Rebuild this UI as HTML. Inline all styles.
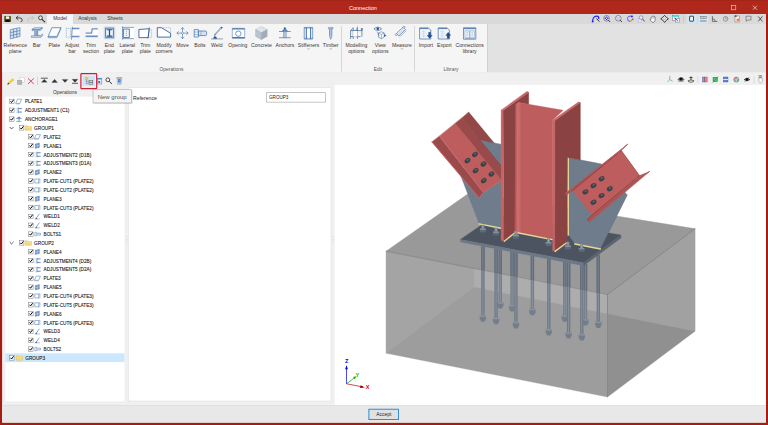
<!DOCTYPE html>
<html><head><meta charset="utf-8"><title>Connection</title>
<style>
html,body{margin:0;padding:0}
body{width:768px;height:425px;overflow:hidden;background:#b0281c;font-family:"Liberation Sans", sans-serif;position:relative}
svg{position:absolute;left:0;top:0;overflow:visible;font-family:"Liberation Sans", sans-serif}
span{position:absolute;left:0;top:0;white-space:nowrap}
</style></head><body>
<svg width="768" height="425" viewBox="0 0 768 425"><rect x="0.00" y="0.00" width="768.00" height="425.00" fill="#a41c13" rx="0" />
<rect x="0.00" y="0.00" width="768.00" height="14.20" fill="#b0281c" rx="0" />
<rect x="2.10" y="14.00" width="763.90" height="408.60" fill="#f0f0f0" rx="0" />
<rect x="0.00" y="0.00" width="768.00" height="0.80" fill="#a2231a" rx="0" /></svg>
<span style="font-size:5.5px;line-height:6.60px;color:#ffffff;transform:translate(362.90px,5.0px) translateX(-50%);">Connection</span>
<svg width="768" height="425" viewBox="0 0 768 425"><rect x="731.7" y="5.7" width="4.1" height="4.1" fill="none" stroke="#fff" stroke-width="0.55" opacity="0.85"/><path d="M752.9 5.6l4.2 4.2M757.1 5.6l-4.2 4.2" stroke="#fff" stroke-width="0.65" fill="none" opacity="0.9"/>
<rect x="2.10" y="14.00" width="763.90" height="10.10" fill="#d9d9d9" rx="0" />
<rect x="47.00" y="14.30" width="26.00" height="9.70" fill="#f5f5f5" rx="0" /></svg>
<span style="font-size:5.0px;line-height:6.00px;color:#333;transform:translate(60.00px,15.0px) translateX(-50%);">Model</span>
<span style="font-size:5.0px;line-height:6.00px;color:#333;transform:translate(87.50px,15.0px) translateX(-50%);">Analysis</span>
<span style="font-size:5.0px;line-height:6.00px;color:#333;transform:translate(115.00px,15.0px) translateX(-50%);">Sheets</span>
<svg width="768" height="425" viewBox="0 0 768 425"><rect x="2.10" y="24.00" width="763.90" height="48.30" fill="#e2e2e2" rx="0" />
<rect x="2.10" y="24.00" width="485.40" height="48.30" fill="#f5f5f5" rx="0" />
<rect x="487.20" y="24.00" width="0.70" height="48.30" fill="#c6c6c6" rx="0" />
<rect x="341.20" y="26.00" width="0.70" height="45.50" fill="#c9c9c9" rx="0" />
<rect x="414.30" y="26.00" width="0.70" height="45.50" fill="#c9c9c9" rx="0" /></svg>
<span style="font-size:5.1px;line-height:6.12px;color:#3c3434;transform:translate(15.30px,42.0px) translateX(-50%);">Reference</span>
<span style="font-size:5.1px;line-height:6.12px;color:#3c3434;transform:translate(15.30px,48.0px) translateX(-50%);">plane</span>
<span style="font-size:5.1px;line-height:6.12px;color:#3c3434;transform:translate(36.80px,42.0px) translateX(-50%);">Bar</span>
<span style="font-size:5.1px;line-height:6.12px;color:#3c3434;transform:translate(54.30px,42.0px) translateX(-50%);">Plate</span>
<span style="font-size:5.1px;line-height:6.12px;color:#3c3434;transform:translate(72.10px,42.0px) translateX(-50%);">Adjust</span>
<span style="font-size:5.1px;line-height:6.12px;color:#3c3434;transform:translate(72.10px,48.0px) translateX(-50%);">bar</span>
<span style="font-size:5.1px;line-height:6.12px;color:#3c3434;transform:translate(91.00px,42.0px) translateX(-50%);">Trim</span>
<span style="font-size:5.1px;line-height:6.12px;color:#3c3434;transform:translate(91.00px,48.0px) translateX(-50%);">section</span>
<span style="font-size:5.1px;line-height:6.12px;color:#3c3434;transform:translate(109.30px,42.0px) translateX(-50%);">End</span>
<span style="font-size:5.1px;line-height:6.12px;color:#3c3434;transform:translate(109.30px,48.0px) translateX(-50%);">plate</span>
<span style="font-size:5.1px;line-height:6.12px;color:#3c3434;transform:translate(127.30px,42.0px) translateX(-50%);">Lateral</span>
<span style="font-size:5.1px;line-height:6.12px;color:#3c3434;transform:translate(127.30px,48.0px) translateX(-50%);">plate</span>
<span style="font-size:5.1px;line-height:6.12px;color:#3c3434;transform:translate(145.20px,42.0px) translateX(-50%);">Trim</span>
<span style="font-size:5.1px;line-height:6.12px;color:#3c3434;transform:translate(145.20px,48.0px) translateX(-50%);">plate</span>
<span style="font-size:5.1px;line-height:6.12px;color:#3c3434;transform:translate(164.00px,42.0px) translateX(-50%);">Modify</span>
<span style="font-size:5.1px;line-height:6.12px;color:#3c3434;transform:translate(164.00px,48.0px) translateX(-50%);">corners</span>
<span style="font-size:5.1px;line-height:6.12px;color:#3c3434;transform:translate(182.50px,42.0px) translateX(-50%);">Move</span>
<span style="font-size:5.1px;line-height:6.12px;color:#3c3434;transform:translate(200.00px,42.0px) translateX(-50%);">Bolts</span>
<span style="font-size:5.1px;line-height:6.12px;color:#3c3434;transform:translate(216.80px,42.0px) translateX(-50%);">Weld</span>
<span style="font-size:5.1px;line-height:6.12px;color:#3c3434;transform:translate(237.80px,42.0px) translateX(-50%);">Opening</span>
<span style="font-size:5.1px;line-height:6.12px;color:#3c3434;transform:translate(261.40px,42.0px) translateX(-50%);">Concrete</span>
<span style="font-size:5.1px;line-height:6.12px;color:#3c3434;transform:translate(284.90px,42.0px) translateX(-50%);">Anchors</span>
<span style="font-size:5.1px;line-height:6.12px;color:#3c3434;transform:translate(308.50px,42.0px) translateX(-50%);">Stiffeners</span>
<svg width="768" height="425" viewBox="0 0 768 425"><path d="M307.6 48.4l0.9 0.9l0.9 -0.9" stroke="#333" stroke-width="0.45" fill="none"/></svg>
<span style="font-size:5.1px;line-height:6.12px;color:#3c3434;transform:translate(330.70px,42.0px) translateX(-50%);">Timber</span>
<svg width="768" height="425" viewBox="0 0 768 425"><path d="M329.8 48.4l0.9 0.9l0.9 -0.9" stroke="#333" stroke-width="0.45" fill="none"/></svg>
<span style="font-size:5.1px;line-height:6.12px;color:#3c3434;transform:translate(356.40px,42.0px) translateX(-50%);">Modelling</span>
<span style="font-size:5.1px;line-height:6.12px;color:#3c3434;transform:translate(356.40px,48.0px) translateX(-50%);">options</span>
<span style="font-size:5.1px;line-height:6.12px;color:#3c3434;transform:translate(380.30px,42.0px) translateX(-50%);">View</span>
<span style="font-size:5.1px;line-height:6.12px;color:#3c3434;transform:translate(380.30px,48.0px) translateX(-50%);">options</span>
<span style="font-size:5.1px;line-height:6.12px;color:#3c3434;transform:translate(401.90px,42.0px) translateX(-50%);">Measure</span>
<svg width="768" height="425" viewBox="0 0 768 425"><path d="M401.0 48.4l0.9 0.9l0.9 -0.9" stroke="#333" stroke-width="0.45" fill="none"/></svg>
<span style="font-size:5.1px;line-height:6.12px;color:#3c3434;transform:translate(425.90px,42.0px) translateX(-50%);">Import</span>
<span style="font-size:5.1px;line-height:6.12px;color:#3c3434;transform:translate(444.40px,42.0px) translateX(-50%);">Export</span>
<span style="font-size:5.1px;line-height:6.12px;color:#3c3434;transform:translate(469.70px,42.0px) translateX(-50%);">Connections</span>
<span style="font-size:5.1px;line-height:6.12px;color:#3c3434;transform:translate(469.70px,48.0px) translateX(-50%);">library</span>
<span style="font-size:4.9px;line-height:5.88px;color:#555;transform:translate(171.50px,67.0px) translateX(-50%);">Operations</span>
<span style="font-size:4.9px;line-height:5.88px;color:#555;transform:translate(378.00px,67.0px) translateX(-50%);">Edit</span>
<span style="font-size:4.9px;line-height:5.88px;color:#555;transform:translate(451.00px,67.0px) translateX(-50%);">Library</span>
<span style="font-size:4.9px;line-height:5.88px;color:#333;transform:translate(65.00px,90.0px) translateX(-50%);">Operations</span>
<svg width="768" height="425" viewBox="0 0 768 425"><rect x="5.50" y="96.60" width="119.00" height="304.70" fill="#ffffff" rx="0" />
<rect x="5.40" y="353.30" width="119.10" height="8.80" fill="#cce8ff" rx="0" /></svg>
<span style="font-size:4.7px;line-height:5.64px;color:#141414;transform:translate(24.90px,99.0px);-webkit-text-stroke:0.1px #333;">PLATE1</span>
<span style="font-size:4.7px;line-height:5.64px;color:#141414;transform:translate(24.90px,108.0px);-webkit-text-stroke:0.1px #333;">ADJUSTMENT1 (C1)</span>
<span style="font-size:4.7px;line-height:5.64px;color:#141414;transform:translate(24.90px,117.0px);-webkit-text-stroke:0.1px #333;">ANCHORAGE1</span>
<span style="font-size:4.7px;line-height:5.64px;color:#141414;transform:translate(34.10px,126.0px);-webkit-text-stroke:0.1px #333;">GROUP1</span>
<span style="font-size:4.7px;line-height:5.64px;color:#141414;transform:translate(43.60px,135.0px);-webkit-text-stroke:0.1px #333;">PLATE2</span>
<span style="font-size:4.7px;line-height:5.64px;color:#141414;transform:translate(43.60px,144.0px);-webkit-text-stroke:0.1px #333;">PLANE1</span>
<span style="font-size:4.7px;line-height:5.64px;color:#141414;transform:translate(43.60px,153.0px);-webkit-text-stroke:0.1px #333;">ADJUSTMENT2 (D1B)</span>
<span style="font-size:4.7px;line-height:5.64px;color:#141414;transform:translate(43.60px,161.0px);-webkit-text-stroke:0.1px #333;">ADJUSTMENT3 (D1A)</span>
<span style="font-size:4.7px;line-height:5.64px;color:#141414;transform:translate(43.60px,170.0px);-webkit-text-stroke:0.1px #333;">PLANE2</span>
<span style="font-size:4.7px;line-height:5.64px;color:#141414;transform:translate(43.60px,179.0px);-webkit-text-stroke:0.1px #333;">PLATE-CUT1 (PLATE2)</span>
<span style="font-size:4.7px;line-height:5.64px;color:#141414;transform:translate(43.60px,188.0px);-webkit-text-stroke:0.1px #333;">PLATE-CUT2 (PLATE2)</span>
<span style="font-size:4.7px;line-height:5.64px;color:#141414;transform:translate(43.60px,197.0px);-webkit-text-stroke:0.1px #333;">PLANE3</span>
<span style="font-size:4.7px;line-height:5.64px;color:#141414;transform:translate(43.60px,206.0px);-webkit-text-stroke:0.1px #333;">PLATE-CUT3 (PLATE2)</span>
<span style="font-size:4.7px;line-height:5.64px;color:#141414;transform:translate(43.60px,214.0px);-webkit-text-stroke:0.1px #333;">WELD1</span>
<span style="font-size:4.7px;line-height:5.64px;color:#141414;transform:translate(43.60px,223.0px);-webkit-text-stroke:0.1px #333;">WELD2</span>
<span style="font-size:4.7px;line-height:5.64px;color:#141414;transform:translate(43.60px,232.0px);-webkit-text-stroke:0.1px #333;">BOLTS1</span>
<span style="font-size:4.7px;line-height:5.64px;color:#141414;transform:translate(34.10px,241.0px);-webkit-text-stroke:0.1px #333;">GROUP2</span>
<span style="font-size:4.7px;line-height:5.64px;color:#141414;transform:translate(43.60px,250.0px);-webkit-text-stroke:0.1px #333;">PLANE4</span>
<span style="font-size:4.7px;line-height:5.64px;color:#141414;transform:translate(43.60px,259.0px);-webkit-text-stroke:0.1px #333;">ADJUSTMENT4 (D2B)</span>
<span style="font-size:4.7px;line-height:5.64px;color:#141414;transform:translate(43.60px,267.0px);-webkit-text-stroke:0.1px #333;">ADJUSTMENT5 (D2A)</span>
<span style="font-size:4.7px;line-height:5.64px;color:#141414;transform:translate(43.60px,276.0px);-webkit-text-stroke:0.1px #333;">PLATE3</span>
<span style="font-size:4.7px;line-height:5.64px;color:#141414;transform:translate(43.60px,285.0px);-webkit-text-stroke:0.1px #333;">PLANE5</span>
<span style="font-size:4.7px;line-height:5.64px;color:#141414;transform:translate(43.60px,294.0px);-webkit-text-stroke:0.1px #333;">PLATE-CUT4 (PLATE3)</span>
<span style="font-size:4.7px;line-height:5.64px;color:#141414;transform:translate(43.60px,303.0px);-webkit-text-stroke:0.1px #333;">PLATE-CUT5 (PLATE3)</span>
<span style="font-size:4.7px;line-height:5.64px;color:#141414;transform:translate(43.60px,312.0px);-webkit-text-stroke:0.1px #333;">PLANE6</span>
<span style="font-size:4.7px;line-height:5.64px;color:#141414;transform:translate(43.60px,321.0px);-webkit-text-stroke:0.1px #333;">PLATE-CUT6 (PLATE3)</span>
<span style="font-size:4.7px;line-height:5.64px;color:#141414;transform:translate(43.60px,329.0px);-webkit-text-stroke:0.1px #333;">WELD3</span>
<span style="font-size:4.7px;line-height:5.64px;color:#141414;transform:translate(43.60px,338.0px);-webkit-text-stroke:0.1px #333;">WELD4</span>
<span style="font-size:4.7px;line-height:5.64px;color:#141414;transform:translate(43.60px,347.0px);-webkit-text-stroke:0.1px #333;">BOLTS2</span>
<span style="font-size:4.7px;line-height:5.64px;color:#141414;transform:translate(25.30px,356.0px);-webkit-text-stroke:0.1px #333;">GROUP3</span>
<svg width="768" height="425" viewBox="0 0 768 425"><rect x="128.30" y="87.50" width="202.80" height="313.60" fill="#ffffff" stroke="#e4e4e4" stroke-width="0.8" rx="0" /></svg>
<span style="font-size:5.15px;line-height:6.18px;color:#222;transform:translate(133.10px,95.0px);">Reference</span>
<svg width="768" height="425" viewBox="0 0 768 425"><rect x="266.35" y="92.65" width="59.00" height="9.50" fill="#ffffff" stroke="#adadad" stroke-width="0.7" rx="0" /></svg>
<span style="font-size:4.6px;line-height:5.52px;color:#222;transform:translate(269.00px,95.0px);">GROUP3</span>
<svg width="768" height="425" viewBox="0 0 768 425"><rect x="126.10" y="236.30" width="1.20" height="0.80" fill="#d2d2d2" rx="0" />
<rect x="332.30" y="236.30" width="1.20" height="0.80" fill="#d2d2d2" rx="0" />
<rect x="126.10" y="238.80" width="1.20" height="0.80" fill="#d2d2d2" rx="0" />
<rect x="332.30" y="238.80" width="1.20" height="0.80" fill="#d2d2d2" rx="0" />
<rect x="126.10" y="241.30" width="1.20" height="0.80" fill="#d2d2d2" rx="0" />
<rect x="332.30" y="241.30" width="1.20" height="0.80" fill="#d2d2d2" rx="0" />
<rect x="334.70" y="84.90" width="431.30" height="320.30" fill="#ffffff" rx="0" />
<rect x="2.10" y="405.20" width="763.90" height="17.40" fill="#e8e8e8" rx="0" />
<rect x="2.10" y="405.10" width="763.90" height="0.60" fill="#dcdcdc" rx="0" />
<rect x="368.90" y="409.20" width="29.50" height="10.40" fill="#e1e1e1" stroke="#0078d7" stroke-width="0.8" rx="0" /></svg>
<span style="font-size:4.9px;line-height:5.88px;color:#222;transform:translate(383.80px,412.0px) translateX(-50%);">Accept</span>
<svg width="768" height="425" viewBox="0 0 768 425"><polygon points="386.20,251.20 470.00,192.50 695.00,228.80 607.50,294.50" fill="#999999" stroke="#999999" stroke-width="0.3" stroke-linejoin="round" /><polygon points="386.20,251.20 607.50,294.50 607.50,397.00 386.20,353.30" fill="#9d9d9d" stroke="#9d9d9d" stroke-width="0.3" stroke-linejoin="round" /><polygon points="386.20,251.20 474.00,268.38 474.00,287.00 386.20,353.30" fill="#a4a4a4" stroke="#a4a4a4" stroke-width="0.3" stroke-linejoin="round" /><polygon points="474.00,268.38 607.50,294.50 607.50,313.70 474.00,287.00" fill="#adadad" stroke="#adadad" stroke-width="0.3" stroke-linejoin="round" /><polygon points="607.50,294.50 695.00,228.80 695.00,331.20 607.50,397.00" fill="#909090" stroke="#909090" stroke-width="0.3" stroke-linejoin="round" /><polygon points="607.50,294.50 695.00,228.80 695.00,331.20 607.50,313.70" fill="#a1a1a1" stroke="#a1a1a1" stroke-width="0.3" stroke-linejoin="round" /><rect x="498.60" y="249.68" width="3.4" height="55.92" fill="#76808c"/><rect x="499.80" y="249.68" width="0.9" height="55.92" fill="#8a94a0"/><rect x="498.60" y="249.68" width="3.4" height="23.85" fill="#626c7a"/><rect x="499.80" y="249.68" width="0.9" height="23.85" fill="#7a8491"/><path d="M497.10 302.20h6.4v3.4l-1.6 3h-3.2l-1.6 -3z" fill="#747e8a"/><rect x="497.10" y="302.20" width="6.4" height="1.4" fill="#8b95a0"/><rect x="510.40" y="251.95" width="3.4" height="56.55" fill="#76808c"/><rect x="511.60" y="251.95" width="0.9" height="56.55" fill="#8a94a0"/><rect x="510.40" y="251.95" width="3.4" height="23.89" fill="#626c7a"/><rect x="511.60" y="251.95" width="0.9" height="23.89" fill="#7a8491"/><path d="M508.90 305.10h6.4v3.4l-1.6 3h-3.2l-1.6 -3z" fill="#747e8a"/><rect x="508.90" y="305.10" width="6.4" height="1.4" fill="#8b95a0"/><rect x="530.70" y="255.86" width="3.4" height="56.34" fill="#76808c"/><rect x="531.90" y="255.86" width="0.9" height="56.34" fill="#8a94a0"/><rect x="530.70" y="255.86" width="3.4" height="23.95" fill="#626c7a"/><rect x="531.90" y="255.86" width="0.9" height="23.95" fill="#7a8491"/><path d="M529.20 308.80h6.4v3.4l-1.6 3h-3.2l-1.6 -3z" fill="#747e8a"/><rect x="529.20" y="308.80" width="6.4" height="1.4" fill="#8b95a0"/><rect x="563.10" y="262.10" width="3.4" height="56.70" fill="#76808c"/><rect x="564.30" y="262.10" width="0.9" height="56.70" fill="#8a94a0"/><rect x="563.10" y="262.10" width="3.4" height="24.06" fill="#626c7a"/><rect x="564.30" y="262.10" width="0.9" height="24.06" fill="#7a8491"/><path d="M561.60 315.40h6.4v3.4l-1.6 3h-3.2l-1.6 -3z" fill="#747e8a"/><rect x="561.60" y="315.40" width="6.4" height="1.4" fill="#8b95a0"/><rect x="583.80" y="264.22" width="3.4" height="58.38" fill="#76808c"/><rect x="585.00" y="264.22" width="0.9" height="58.38" fill="#8a94a0"/><rect x="583.80" y="264.22" width="3.4" height="25.98" fill="#626c7a"/><rect x="585.00" y="264.22" width="0.9" height="25.98" fill="#7a8491"/><path d="M582.30 319.20h6.4v3.4l-1.6 3h-3.2l-1.6 -3z" fill="#747e8a"/><rect x="582.30" y="319.20" width="6.4" height="1.4" fill="#8b95a0"/><rect x="481.20" y="246.33" width="3.4" height="72.47" fill="#707a87"/><rect x="482.40" y="246.33" width="0.9" height="72.47" fill="#8a94a0"/><rect x="481.20" y="246.33" width="3.4" height="23.79" fill="#626c7a"/><rect x="482.40" y="246.33" width="0.9" height="23.79" fill="#7a8491"/><path d="M479.70 315.40h6.4v3.4l-1.6 3h-3.2l-1.6 -3z" fill="#747e8a"/><rect x="479.70" y="315.40" width="6.4" height="1.4" fill="#8b95a0"/><rect x="494.40" y="248.87" width="3.4" height="72.43" fill="#707a87"/><rect x="495.60" y="248.87" width="0.9" height="72.43" fill="#8a94a0"/><rect x="494.40" y="248.87" width="3.4" height="23.84" fill="#626c7a"/><rect x="495.60" y="248.87" width="0.9" height="23.84" fill="#7a8491"/><path d="M492.90 317.90h6.4v3.4l-1.6 3h-3.2l-1.6 -3z" fill="#747e8a"/><rect x="492.90" y="317.90" width="6.4" height="1.4" fill="#8b95a0"/><rect x="514.20" y="252.68" width="3.4" height="72.72" fill="#707a87"/><rect x="515.40" y="252.68" width="0.9" height="72.72" fill="#8a94a0"/><rect x="514.20" y="252.68" width="3.4" height="23.90" fill="#626c7a"/><rect x="515.40" y="252.68" width="0.9" height="23.90" fill="#7a8491"/><path d="M512.70 322.00h6.4v3.4l-1.6 3h-3.2l-1.6 -3z" fill="#747e8a"/><rect x="512.70" y="322.00" width="6.4" height="1.4" fill="#8b95a0"/><rect x="547.10" y="259.02" width="3.4" height="73.48" fill="#707a87"/><rect x="548.30" y="259.02" width="0.9" height="73.48" fill="#8a94a0"/><rect x="547.10" y="259.02" width="3.4" height="24.00" fill="#626c7a"/><rect x="548.30" y="259.02" width="0.9" height="24.00" fill="#7a8491"/><path d="M545.60 329.10h6.4v3.4l-1.6 3h-3.2l-1.6 -3z" fill="#747e8a"/><rect x="545.60" y="329.10" width="6.4" height="1.4" fill="#8b95a0"/><rect x="566.90" y="262.83" width="3.4" height="72.67" fill="#707a87"/><rect x="568.10" y="262.83" width="0.9" height="72.67" fill="#8a94a0"/><rect x="566.90" y="262.83" width="3.4" height="24.07" fill="#626c7a"/><rect x="568.10" y="262.83" width="0.9" height="24.07" fill="#7a8491"/><path d="M565.40 332.10h6.4v3.4l-1.6 3h-3.2l-1.6 -3z" fill="#747e8a"/><rect x="565.40" y="332.10" width="6.4" height="1.4" fill="#8b95a0"/><rect x="580.10" y="265.37" width="3.4" height="72.13" fill="#707a87"/><rect x="581.30" y="265.37" width="0.9" height="72.13" fill="#8a94a0"/><rect x="580.10" y="265.37" width="3.4" height="24.11" fill="#626c7a"/><rect x="581.30" y="265.37" width="0.9" height="24.11" fill="#7a8491"/><path d="M578.60 334.10h6.4v3.4l-1.6 3h-3.2l-1.6 -3z" fill="#747e8a"/><rect x="578.60" y="334.10" width="6.4" height="1.4" fill="#8b95a0"/><rect x="596.60" y="254.76" width="3.4" height="70.24" fill="#707a87"/><rect x="597.80" y="254.76" width="0.9" height="70.24" fill="#8a94a0"/><rect x="596.60" y="254.76" width="3.4" height="37.95" fill="#626c7a"/><rect x="597.80" y="254.76" width="0.9" height="37.95" fill="#7a8491"/><path d="M595.10 321.60h6.4v3.4l-1.6 3h-3.2l-1.6 -3z" fill="#747e8a"/><rect x="595.10" y="321.60" width="6.4" height="1.4" fill="#8b95a0"/><polyline points="386.20,251.20 607.50,294.50 695.00,228.80" fill="none" stroke="#6c6c6c" stroke-width="0.5" stroke-linecap="round" opacity="0.9"/><polyline points="607.50,294.50 607.50,397.00" fill="none" stroke="#727272" stroke-width="0.5" stroke-linecap="round" /><polyline points="386.20,251.20 470.00,192.50" fill="none" stroke="#8c8c8c" stroke-width="0.3" stroke-linecap="round" /><polyline points="470.00,192.50 695.00,228.80" fill="none" stroke="#8c8c8c" stroke-width="0.3" stroke-linecap="round" /><polygon points="460.40,239.40 496.50,214.50 621.00,235.00 583.50,262.70" fill="#4b5460" stroke="#4b5460" stroke-width="0.3" stroke-linejoin="round" /><polygon points="460.40,239.40 583.50,262.70 583.50,265.70 460.40,242.00" fill="#6c7887" stroke="#6c7887" stroke-width="0.3" stroke-linejoin="round" /><polygon points="583.50,262.70 621.00,235.00 621.00,238.00 583.50,265.70" fill="#5a6470" stroke="#5a6470" stroke-width="0.3" stroke-linejoin="round" /><polygon points="461.90,118.10 468.75,112.10 495.00,144.00 480.00,140.25" fill="#934747" stroke="#934747" stroke-width="0.3" stroke-linejoin="round" /><polygon points="480.00,140.25 501.25,144.40 501.25,229.00 479.10,223.75 461.00,176.50" fill="#6e7c8b" stroke="#6e7c8b" stroke-width="0.3" stroke-linejoin="round" /><polygon points="567.50,157.50 601.25,164.00 627.25,195.00 600.40,248.75 574.75,243.75 568.75,235.00" fill="#6e7c8b" stroke="#6e7c8b" stroke-width="0.3" stroke-linejoin="round" /><polyline points="480.00,140.25 501.25,144.40" fill="none" stroke="#55606c" stroke-width="0.3" stroke-linecap="round" /><polyline points="567.50,157.50 601.25,164.00" fill="none" stroke="#55606c" stroke-width="0.3" stroke-linecap="round" /><polyline points="627.25,195.00 600.40,248.75" fill="none" stroke="#55606c" stroke-width="0.3" stroke-linecap="round" /><polyline points="479.10,223.90 501.00,228.20" fill="none" stroke="#e6da96" stroke-width="1.4" stroke-linecap="round" /><polyline points="568.10,158.30 568.10,235.00" fill="none" stroke="#e6da96" stroke-width="1.7" stroke-linecap="round" /><polyline points="574.75,243.90 600.40,248.90" fill="none" stroke="#e6da96" stroke-width="1.5" stroke-linecap="round" /><polygon points="503.00,110.50 527.50,92.00 528.75,92.50 528.75,104.50 518.75,102.50 516.50,104.00 516.50,232.00 504.00,241.00" fill="#8b4242" stroke="#8b4242" stroke-width="0.3" stroke-linejoin="round" /><polygon points="501.25,110.00 527.00,91.25 528.75,92.50 503.00,110.80" fill="#c66a6a" stroke="#c66a6a" stroke-width="0.3" stroke-linejoin="round" /><polygon points="501.10,110.00 503.20,110.60 503.80,241.00 501.00,240.60" fill="#c46464" stroke="#c46464" stroke-width="0.3" stroke-linejoin="round" /><polygon points="516.50,104.00 518.75,102.50 563.20,110.20 552.60,120.00 552.80,239.50 514.75,232.00" fill="#bd5d5d" stroke="#bd5d5d" stroke-width="0.3" stroke-linejoin="round" /><defs><linearGradient id="fl" x1="0" x2="1"><stop offset="0" stop-color="#a85050"/><stop offset="0.45" stop-color="#d27070"/><stop offset="1" stop-color="#bd5d5d"/></linearGradient></defs><polygon points="515.20,104.50 518.75,102.50 521.50,103.00 521.50,233.30 514.75,232.00" fill="url(#fl)" /><polygon points="554.75,120.50 579.00,102.30 580.40,102.80 580.40,160.00 567.50,157.50 567.25,241.30 554.75,251.25" fill="#8b4242" stroke="#8b4242" stroke-width="0.3" stroke-linejoin="round" /><polygon points="552.50,120.00 578.75,101.80 580.40,102.80 554.75,120.80" fill="#c66a6a" stroke="#c66a6a" stroke-width="0.3" stroke-linejoin="round" /><polygon points="552.40,120.00 554.90,120.60 554.90,251.25 552.60,250.80" fill="#c46464" stroke="#c46464" stroke-width="0.3" stroke-linejoin="round" /><polyline points="504.30,241.20 514.30,233.20" fill="none" stroke="#e6da96" stroke-width="1.4" stroke-linecap="round" /><polyline points="515.00,232.30 552.00,239.60" fill="none" stroke="#e6da96" stroke-width="1.4" stroke-linecap="round" /><polyline points="555.00,251.40 567.00,242.50" fill="none" stroke="#e6da96" stroke-width="1.4" stroke-linecap="round" /><polygon points="431.90,141.90 439.40,136.25 483.10,192.50 479.40,198.10" fill="#9a4a4a" stroke="#9a4a4a" stroke-width="0.3" stroke-linejoin="round" /><polygon points="439.40,136.25 455.00,123.50 500.90,178.75 500.90,180.60 483.10,192.50" fill="#bd5d5d" stroke="#bd5d5d" stroke-width="0.3" stroke-linejoin="round" /><polygon points="455.00,123.50 461.90,118.10 500.90,165.60 500.90,178.75" fill="#9a4a4a" stroke="#9a4a4a" stroke-width="0.3" stroke-linejoin="round" /><polyline points="431.90,141.90 479.40,198.10" fill="none" stroke="#c86868" stroke-width="0.9" stroke-linecap="round" /><polyline points="439.80,136.50 483.30,192.30" fill="none" stroke="#cf7070" stroke-width="0.7" stroke-linecap="round" /><polyline points="461.90,118.10 500.90,165.60" fill="none" stroke="#7c3a3a" stroke-width="0.35" stroke-linecap="round" /><polyline points="479.40,198.10 483.10,192.50 500.90,180.60" fill="none" stroke="#cc6e6e" stroke-width="0.8" stroke-linecap="round" /><polyline points="431.90,141.90 468.75,112.10" fill="none" stroke="#b05a5a" stroke-width="0.4" stroke-linecap="round" /><g transform="translate(475.00 154.40) rotate(-35)"><ellipse rx="3.1" ry="2.3" fill="#3b4047"/><ellipse cx="0.6" cy="-0.5" rx="1.5" ry="1.1" fill="#565c64"/></g><g transform="translate(467.50 160.60) rotate(-35)"><ellipse rx="3.1" ry="2.3" fill="#3b4047"/><ellipse cx="0.6" cy="-0.5" rx="1.5" ry="1.1" fill="#565c64"/></g><g transform="translate(483.50 164.00) rotate(-35)"><ellipse rx="3.1" ry="2.3" fill="#3b4047"/><ellipse cx="0.6" cy="-0.5" rx="1.5" ry="1.1" fill="#565c64"/></g><g transform="translate(475.60 170.60) rotate(-35)"><ellipse rx="3.1" ry="2.3" fill="#3b4047"/><ellipse cx="0.6" cy="-0.5" rx="1.5" ry="1.1" fill="#565c64"/></g><g transform="translate(491.50 174.00) rotate(-35)"><ellipse rx="3.1" ry="2.3" fill="#3b4047"/><ellipse cx="0.6" cy="-0.5" rx="1.5" ry="1.1" fill="#565c64"/></g><g transform="translate(483.75 180.60) rotate(-35)"><ellipse rx="3.1" ry="2.3" fill="#3b4047"/><ellipse cx="0.6" cy="-0.5" rx="1.5" ry="1.1" fill="#565c64"/></g><polygon points="627.50,144.40 621.25,150.60 572.50,190.60 566.30,195.20 565.20,193.50" fill="#a85252" stroke="#a85252" stroke-width="0.3" stroke-linejoin="round" /><polygon points="621.25,150.60 639.40,175.60 592.25,215.00 572.50,190.60" fill="#bd5d5d" stroke="#bd5d5d" stroke-width="0.3" stroke-linejoin="round" /><polygon points="639.40,175.60 649.40,171.60 589.40,222.25 586.90,220.25 592.25,215.00" fill="#b25858" stroke="#b25858" stroke-width="0.3" stroke-linejoin="round" /><polyline points="627.50,144.40 565.40,193.60" fill="none" stroke="#b85c5c" stroke-width="0.7" stroke-linecap="round" /><polyline points="621.25,150.60 572.50,190.60" fill="none" stroke="#7e3a3a" stroke-width="0.7" stroke-linecap="round" /><polyline points="639.40,175.60 592.25,215.00 587.50,219.50" fill="none" stroke="#7e3a3a" stroke-width="0.75" stroke-linecap="round" /><polyline points="644.50,173.80 588.20,221.20" fill="none" stroke="#8a4242" stroke-width="0.45" stroke-linecap="round" /><polyline points="649.40,171.60 589.40,222.25" fill="none" stroke="#b85c5c" stroke-width="0.5" stroke-linecap="round" /><polyline points="616.90,153.75 627.50,144.40" fill="none" stroke="#b65c5c" stroke-width="0.9" stroke-linecap="round" /><polyline points="621.25,150.60 639.40,175.60" fill="none" stroke="#a24e4e" stroke-width="0.8" stroke-linecap="round" /><polyline points="634.00,180.30 649.40,171.60" fill="none" stroke="#b65c5c" stroke-width="0.9" stroke-linecap="round" /><g transform="translate(601.60 178.75) rotate(-30)"><ellipse rx="3.1" ry="2.3" fill="#3b4047"/><ellipse cx="0.6" cy="-0.5" rx="1.5" ry="1.1" fill="#565c64"/></g><g transform="translate(593.50 185.60) rotate(-30)"><ellipse rx="3.1" ry="2.3" fill="#3b4047"/><ellipse cx="0.6" cy="-0.5" rx="1.5" ry="1.1" fill="#565c64"/></g><g transform="translate(585.40 191.90) rotate(-30)"><ellipse rx="3.1" ry="2.3" fill="#3b4047"/><ellipse cx="0.6" cy="-0.5" rx="1.5" ry="1.1" fill="#565c64"/></g><g transform="translate(609.75 188.75) rotate(-30)"><ellipse rx="3.1" ry="2.3" fill="#3b4047"/><ellipse cx="0.6" cy="-0.5" rx="1.5" ry="1.1" fill="#565c64"/></g><g transform="translate(601.60 195.60) rotate(-30)"><ellipse rx="3.1" ry="2.3" fill="#3b4047"/><ellipse cx="0.6" cy="-0.5" rx="1.5" ry="1.1" fill="#565c64"/></g><g transform="translate(593.50 202.25) rotate(-30)"><ellipse rx="3.1" ry="2.3" fill="#3b4047"/><ellipse cx="0.6" cy="-0.5" rx="1.5" ry="1.1" fill="#565c64"/></g><rect x="481.40" y="224.80" width="3" height="5" rx="0.5" fill="#7a8693"/><rect x="482.50" y="224.80" width="0.9" height="5" fill="#9ba6b1"/><rect x="479.90" y="228.60" width="6" height="3.8" rx="0.8" fill="#5d6975"/><rect x="479.90" y="228.60" width="6" height="1.3" rx="0.5" fill="#85919d"/><rect x="494.50" y="227.80" width="3" height="5" rx="0.5" fill="#7a8693"/><rect x="495.60" y="227.80" width="0.9" height="5" fill="#9ba6b1"/><rect x="493.00" y="231.60" width="6" height="3.8" rx="0.8" fill="#5d6975"/><rect x="493.00" y="231.60" width="6" height="1.3" rx="0.5" fill="#85919d"/><rect x="514.50" y="231.05" width="3" height="5" rx="0.5" fill="#7a8693"/><rect x="515.60" y="231.05" width="0.9" height="5" fill="#9ba6b1"/><rect x="513.00" y="234.85" width="6" height="3.8" rx="0.8" fill="#5d6975"/><rect x="513.00" y="234.85" width="6" height="1.3" rx="0.5" fill="#85919d"/><rect x="547.00" y="238.30" width="3" height="5" rx="0.5" fill="#7a8693"/><rect x="548.10" y="238.30" width="0.9" height="5" fill="#9ba6b1"/><rect x="545.50" y="242.10" width="6" height="3.8" rx="0.8" fill="#5d6975"/><rect x="545.50" y="242.10" width="6" height="1.3" rx="0.5" fill="#85919d"/><rect x="566.40" y="241.80" width="3" height="5" rx="0.5" fill="#7a8693"/><rect x="567.50" y="241.80" width="0.9" height="5" fill="#9ba6b1"/><rect x="564.90" y="245.60" width="6" height="3.8" rx="0.8" fill="#5d6975"/><rect x="564.90" y="245.60" width="6" height="1.3" rx="0.5" fill="#85919d"/><rect x="580.10" y="244.20" width="3" height="5" rx="0.5" fill="#7a8693"/><rect x="581.20" y="244.20" width="0.9" height="5" fill="#9ba6b1"/><rect x="578.60" y="248.00" width="6" height="3.8" rx="0.8" fill="#5d6975"/><rect x="578.60" y="248.00" width="6" height="1.3" rx="0.5" fill="#85919d"/><g stroke-width="0.7" fill="none"><path d="M346.5 383.75L355 377.5" stroke="#00b400"/><path d="M346.5 383.75L363 387" stroke="#b40000"/><path d="M346.5 383.75V366.5" stroke="#0000e0"/></g><path d="M346.5 365.2l-1.4 4h2.8z" fill="#0000e0"/><path d="M356.6 376.3l-3.6 0.8l1.7 2.2z" fill="#00b400"/><path d="M364.8 387.4l-4.2 -2.1l-0.6 2.7z" fill="#9a0000"/><text x="346.6" y="363.3" font-size="5.6" font-weight="bold" fill="#0000e0" text-anchor="middle">Z</text><text x="357.3" y="376.9" font-size="5.6" font-weight="bold" fill="#00c000" text-anchor="middle">Y</text><text x="367.6" y="389.3" font-size="5.6" font-weight="bold" fill="#e00000" text-anchor="middle">X</text>
<path d="M10.3 29.6L20 27.6V36.4L10.3 38.9Z" stroke="#3f6fa6" stroke-width="0.6" fill="#d6e2f0" /><path d="M13.5 28.9V38.1M16.8 28.3V37.3M10.3 32.7L20 30.5M10.3 35.8L20 33.5" stroke="#3f6fa6" stroke-width="0.6" fill="none" /><path d="M32 29.4L34.6 27.7H42.3L39.8 29.4Z" stroke="#3f6fa6" stroke-width="0.5" fill="#d6e2f0" /><path d="M32 29.4H39.8V30.6H37.6V35.6H40.8L42.4 34.2" stroke="#3f6fa6" stroke-width="0.5" fill="none" /><path d="M34.6 30.6H37.6V35.6H34.6Z" stroke="#3f6fa6" stroke-width="0.4" fill="#8fa9c9" /><path d="M31.4 35.8H40.6V37.4H31.4Z" stroke="#3f6fa6" stroke-width="0.5" fill="#d6e2f0" /><path d="M40.6 37.4L42.6 35.6V34.2L40.6 35.8M39.8 29.4L42.3 27.7V29L40 30.6" stroke="#3f6fa6" stroke-width="0.5" fill="#d6e2f0" /><path d="M32 29.4V30.6H34.6" stroke="#3f6fa6" stroke-width="0.5" fill="none" /><path d="M48.1 36.4L51.9 27.7H60.9L56.9 36.4Z" stroke="#3f6fa6" stroke-width="0.7" fill="#fafcff" /><path d="M48.1 36.4V37.7H56.9L60.9 29V27.7" stroke="#3f6fa6" stroke-width="0.5" fill="none" /><path d="M48.3 37.1H56.8" stroke="#7f9cc2" stroke-width="0.9" fill="none" /><path d="M66.3 28.3H70.6V37.2H66.3Z" stroke="#3f6fa6" stroke-width="0.45" fill="none" stroke-dasharray="1 0.7"/><path d="M72 28.4H79.4V36.6H72Z" stroke="#3f6fa6" stroke-width="0" fill="#ffffff" /><path d="M72 28.5H79.4M72 36.5H79.4" stroke="#6a90c0" stroke-width="1.4" fill="none" /><path d="M72.3 26.8L71.5 39.6" stroke="#3f6fa6" stroke-width="0.7" fill="none" /><path d="M85.6 33.3H91.6L92.2 28.9H97.8V36.4H85.6Z" stroke="#3f6fa6" stroke-width="0" fill="#ffffff" /><path d="M85.6 33.2H91.6L92.2 28.9H97.8" stroke="#6a90c0" stroke-width="1.2" fill="none" /><path d="M85.6 36.3H97.8" stroke="#6a90c0" stroke-width="1.7" fill="none" /><rect x="104.2" y="26.9" width="10.6" height="12" rx="0.8" fill="#cfe0f2" stroke="#9fc0e4" stroke-width="0.4"/><path d="M105.6 28.2H113.4V37.6H105.6Z" stroke="#1f4e8c" stroke-width="0.7" fill="#f8fbfe" /><path d="M106.6 29.7H112.4M106.6 36.1H112.4" stroke="#1f4e8c" stroke-width="1.1" fill="none" /><path d="M109.5 29.7V36.1" stroke="#1f4e8c" stroke-width="1.3" fill="none" /><path d="M107 31.8v0.5M107 33.8v0.5M112 31.8v0.5M112 33.8v0.5" stroke="#4a74a8" stroke-width="0.5" fill="none" /><rect x="122.5" y="27.3" width="11.5" height="11.4" fill="#ffffff"/><path d="M122.6 26.4V39.6" stroke="#3f6fa6" stroke-width="0.7" fill="none" /><path d="M122.6 27.4H134M122.6 38.6H134" stroke="#3f6fa6" stroke-width="0.6" fill="none" /><path d="M123.4 29H129.4V37.5H123.4Z" stroke="#1f4e8c" stroke-width="0.7" fill="#eef3fa" /><path d="M126.4 30.8v0.7M126.4 32.9v0.7M126.4 35v0.7" stroke="#1f4e8c" stroke-width="0.7" fill="none" /><path d="M138.9 29.5L149.2 28.7L148.2 37.6H138.9Z" stroke="#1f4e8c" stroke-width="0.8" fill="#ffffff" /><path d="M149.5 27.2L147.9 38.6" stroke="#1f4e8c" stroke-width="0.5" fill="none" /><path d="M149.2 29.4H151.6V37.6H148.2" stroke="#3f6fa6" stroke-width="0.4" fill="none" stroke-dasharray="0.9 0.7"/><path d="M157.3 27.7H161.4L170.6 33.2V37.1H157.3Z" stroke="#1f4e8c" stroke-width="0.8" fill="#ffffff" /><path d="M161.4 27.7H170.6V33.2" stroke="#3f6fa6" stroke-width="0.4" fill="none" stroke-dasharray="0.9 0.7"/><path d="M182.5 27.6V38.6M176.9 33.1H188.1" stroke="#3f6fa6" stroke-width="0.6" fill="none" /><path d="M180.8 29.4L182.5 27.5L184.2 29.4M180.8 36.8L182.5 38.7L184.2 36.8M178.7 31.4L176.8 33.1L178.7 34.8M186.3 31.4L188.2 33.1L186.3 34.8" stroke="#3f6fa6" stroke-width="0.6" fill="none" /><circle cx="182.5" cy="33.1" r="1" fill="#f5f5f5" stroke="#3f6fa6" stroke-width="0.4"/><path d="M194.2 29.6H198.4V37H194.2Z" stroke="#3f6fa6" stroke-width="0.7" fill="#eef3fa" /><path d="M194.2 32H198.4M194.2 34.6H198.4" stroke="#3f6fa6" stroke-width="0.4" fill="none" /><path d="M198.4 31H205.4Q206.6 31 206.6 32.2V34.4Q206.6 35.6 205.4 35.6H198.4Z" stroke="#3f6fa6" stroke-width="0.7" fill="#d6e2f0" /><path d="M201 31V35.6" stroke="#3f6fa6" stroke-width="0.4" fill="none" /><path d="M211 38.9H223" stroke="#1f4e8c" stroke-width="0.5" fill="none" /><path d="M215 34.6L221.3 27.8" stroke="#6f94c0" stroke-width="1.5" fill="none" stroke-linecap="round"/><path d="M215.2 34.4L221.1 28" stroke="#f5f5f5" stroke-width="0.5" fill="none" /><circle cx="221.6" cy="27.6" r="0.9" fill="#1f4e8c"/><path d="M213.3 38.6Q214.3 36 215.2 36.4Q216.6 37 217 38.6Z" stroke="#1f4e8c" stroke-width="0.2" fill="#1f4e8c" /><path d="M214.3 36.6L215.2 34.6" stroke="#1f4e8c" stroke-width="0.5" fill="none" /><path d="M232.3 28.3H244.7V38.3H232.3Z" stroke="#3f6fa6" stroke-width="0.5" fill="#ffffff" /><path d="M232.3 28.9H244.7M232.3 37.7H244.7" stroke="#4a79b0" stroke-width="1.3" fill="none" /><circle cx="238.3" cy="33.7" r="2.7" fill="#fff" stroke="#3f6fa6" stroke-width="0.7"/><polygon points="261.4,26.6 267.2,29.6 261.4,32.8 255.6,29.6" fill="#e4e8ee" stroke="#8fa3bd" stroke-width="0.35"/><polygon points="255.6,29.6 261.4,32.8 261.4,39.6 255.6,36.4" fill="#bcc5d0" stroke="#8fa3bd" stroke-width="0.35"/><polygon points="267.2,29.6 261.4,32.8 261.4,39.6 267.2,36.4" fill="#a3adba" stroke="#8fa3bd" stroke-width="0.35"/><path d="M257 31.6l0.5 0.3M258.6 34l0.5 0.3M257.4 35.6l0.5 0.3M259.8 36.8l0.5 0.3M263 34.6l0.5 -0.3M265 32.4l0.5 -0.3M264.6 36l0.5 -0.3M262.6 37.6l0.5 -0.3M259.6 29.4h0.6M262.4 28.4h0.6M263.4 30.4h0.6" stroke="#7d8b9c" stroke-width="0.35" fill="none" /><path d="M279 31.5H290.7M279 37.7H290.7" stroke="#3f6fa6" stroke-width="0.7" fill="none" /><path d="M283.6 31.5V37.7H286.2V31.5" stroke="#3f6fa6" stroke-width="0.5" fill="#d6e2f0" /><path d="M284.9 31.5V37.7" stroke="#3f6fa6" stroke-width="0.4" fill="none" /><path d="M282 31.3Q284.9 26.6 287.8 31.3Z" stroke="#3f6fa6" stroke-width="0.3" fill="#5e87b8" /><path d="M283.9 28.9L284.9 27L285.9 28.9Z" stroke="#1f4e8c" stroke-width="0.3" fill="#1f4e8c" /><path d="M304.2 27.4H312.7V39.1H304.2Z" stroke="#3f6fa6" stroke-width="0.6" fill="#dfe8f3" /><path d="M306.9 28V38.5H310V28Z" stroke="#3f6fa6" stroke-width="0" fill="#ffffff" /><path d="M306.4 27.4V39.1M310.5 27.4V39.1" stroke="#4f7db5" stroke-width="1.0" fill="none" /><path d="M304.2 28.2H312.7M304.2 38.3H312.7" stroke="#3f6fa6" stroke-width="0.5" fill="none" /><path d="M328.4 27.4H333V28.9H328.4Z" stroke="#3f6fa6" stroke-width="0.5" fill="#e6eef8" /><path d="M329.5 28.9H331.9V36.2L330.7 39.4L329.5 36.2Z" stroke="#3f6fa6" stroke-width="0.5" fill="#bcd0e8" /><path d="M329.5 31h2.4M329.5 32.8h2.4M329.5 34.6h2.4" stroke="#3f6fa6" stroke-width="0.3" fill="none" /><path d="M350.6 39V30.6H362.4M353.2 39V27.6M350.6 36.6H360.6M357.4 26.6V39M361.9 28V36.6" stroke="#1f4e8c" stroke-width="0.6" fill="none" /><path d="M353.2 31H357.4V36.6H353.2Z" stroke="#3f6fa6" stroke-width="0" fill="#ffffff" /><path d="M350.6 30.6L353.2 27.6M355.6 30.6L357.4 28M361 30L361.9 28L362.8 30" stroke="#1f4e8c" stroke-width="0.5" fill="none" /><path d="M373.9 28.9Q377.8 25.4 381.6 28.9Q377.8 32 373.9 28.9Z" stroke="#1f4e8c" stroke-width="0.6" fill="#ffffff" /><circle cx="377.8" cy="28.8" r="1.3" fill="#1f4e8c"/><path d="M378.4 33.2L381.2 31.8L384.2 33V37L381.4 38.6L378.4 37.2Z" stroke="#1f4e8c" stroke-width="0.5" fill="#ffffff" /><path d="M378.4 33.2L381.4 34.4L384.2 33M381.4 34.4V38.6" stroke="#1f4e8c" stroke-width="0.4" fill="none" /><path d="M384.2 34.5L386.2 35.5L384.2 36.6" stroke="#1f4e8c" stroke-width="0.4" fill="#1f4e8c" /><path d="M377 31.6L379.4 36.2" stroke="#1f4e8c" stroke-width="0.4" fill="none" /><path d="M396.4 33.4L403.2 27L405.6 29.6L398.8 36Z" stroke="#1f4e8c" stroke-width="0.5" fill="#e7eef7" /><path d="M398.4 33.6l0.9 0.9M399.8 32.3l0.9 0.9M401.2 31l0.9 0.9M402.6 29.7l0.9 0.9" stroke="#1f4e8c" stroke-width="0.35" fill="none" /><circle cx="396.2" cy="34.6" r="1" fill="#fff" stroke="#1f4e8c" stroke-width="0.4"/><circle cx="404" cy="27.2" r="1" fill="#fff" stroke="#1f4e8c" stroke-width="0.4"/><path d="M399.4 37.2L406.4 30.6" stroke="#3f6fa6" stroke-width="0.4" fill="none" /><path d="M419.6 27.9H428.20000000000005L430.8 30V39H419.6Z" stroke="#3f6fa6" stroke-width="0.7" fill="#f3f7fc" /><path d="M419.6 28.5H428.40000000000003" stroke="#5e87b8" stroke-width="1.2" fill="none" /><path d="M421.6 31.4h4M421.6 33.2h5M421.6 35h4M421.6 36.8h5M423.6 30.6v7" stroke="#9db6d6" stroke-width="0.3" fill="none" /><path d="M428.5 32.2h2.2v3h1.6L429.6 38.6L426.90000000000003 35.2h1.6Z" stroke="#1f4e8c" stroke-width="0.2" fill="#1f4e8c" /><path d="M438.2 27.9H446.8L449.4 30V39H438.2Z" stroke="#3f6fa6" stroke-width="0.7" fill="#f3f7fc" /><path d="M438.2 28.5H447.0" stroke="#5e87b8" stroke-width="1.2" fill="none" /><path d="M440.2 31.4h4M440.2 33.2h5M440.2 35h4M440.2 36.8h5M442.2 30.6v7" stroke="#9db6d6" stroke-width="0.3" fill="none" /><path d="M447.09999999999997 38.6h2.2v-3h1.6L448.2 32.2L445.5 35.6h1.6Z" stroke="#1f4e8c" stroke-width="0.2" fill="#1f4e8c" /><path d="M463.5 27.8H475.8V39.2H463.5Z" stroke="#3f6fa6" stroke-width="0.7" fill="#f3f7fc" /><path d="M463.5 28.5H475.8" stroke="#5e87b8" stroke-width="1.3" fill="none" /><path d="M464.9 30.8H469.3V37.8H464.9ZM470 30.8H474.4V37.8H470Z" stroke="#3f6fa6" stroke-width="0.4" fill="#ffffff" /><path d="M465.8 32.4h2.6M465.8 34h2.6M465.8 35.6h2.6M470.9 32.4h2.6M470.9 34h2.6M470.9 35.6h2.6M467.1 31.6v5.4M472.2 31.6v5.4" stroke="#7fa0cb" stroke-width="0.3" fill="none" /><path d="M464.9 38.4H474.4" stroke="#3f6fa6" stroke-width="0.4" fill="none" />
<rect x="4.3" y="15.9" width="6.6" height="6" rx="0.5" fill="#4c4a08"/><rect x="5.9" y="16.4" width="3.4" height="2.4" fill="#ffffff"/><rect x="5.6" y="19.9" width="4" height="2" fill="#0a0a0a"/><path d="M16.2 17.9H20Q22.2 18 22.2 20.2Q22.2 21.6 20.6 21.8" stroke="#3a3a3a" stroke-width="0.9" fill="none" /><path d="M18.3 15.9L16 17.9L18.3 19.9" stroke="#3a3a3a" stroke-width="0.9" fill="none" /><path d="M33.6 17.9H30Q27.8 18 27.8 20.2Q27.8 21.4 28.8 21.6" stroke="#bdbdbd" stroke-width="0.8" fill="none" /><path d="M31.6 16L33.8 17.9L31.6 19.8" stroke="#bdbdbd" stroke-width="0.8" fill="none" /><circle cx="40.5" cy="17.8" r="1.9" fill="#f2f2f2" stroke="#333" stroke-width="0.9"/><path d="M42 19.4L44.7 21.9" stroke="#333" stroke-width="1.1" fill="none" stroke-linecap="round"/><path d="M592.6 21.8Q592.6 16 597 16.2Q599.4 16.6 598.6 19" stroke="#1a1aff" stroke-width="1.2" fill="none" /><path d="M592.6 22.4v-1.6" stroke="#1a1aff" stroke-width="1.6" fill="none" /><path d="M596.4 18.4L599.4 21.6" stroke="#222" stroke-width="0.9" fill="none" /><circle cx="606.6" cy="18.3" r="2.8" fill="#f6f6f6" stroke="#4a4a4a" stroke-width="0.6"/><path d="M608.5 20.3L610.0 21.8" stroke="#111" stroke-width="1.0" fill="none" /><path d="M606.6 16.4v3.8M604.7 18.3h3.8" stroke="#2a2aff" stroke-width="1.4" fill="none" /><circle cx="606.6" cy="18.3" r="0.7" fill="#fff"/><circle cx="618.3" cy="18.3" r="2.8" fill="#f6f6f6" stroke="#4a4a4a" stroke-width="0.6"/><path d="M620.1999999999999 20.3L621.6999999999999 21.8" stroke="#111" stroke-width="1.0" fill="none" /><path d="M616.9 17.2h2.6v2.2h-2.6zM617.6 18.9l1.4-1.2" stroke="#6a7aff" stroke-width="0.4" fill="none" /><path d="M631.8 16.4Q628 15.2 627.4 18.6Q627.6 21.6 630.4 21.4" stroke="#2a3aff" stroke-width="0.8" fill="none" /><rect x="631" y="15.6" width="1.8" height="1.6" fill="#1a1aff"/><path d="M630.6 21L633.2 19" stroke="#d89030" stroke-width="1.1" fill="none" /><path d="M632.2 19.6L633.4 18.8" stroke="#e03030" stroke-width="1.1" fill="none" /><rect x="638.6" y="18.4" width="2.6" height="3.6" fill="#e8e8ff" stroke="#9a9aff" stroke-width="0.3"/><circle cx="641" cy="17.6" r="1.9" fill="#dfe6ff" stroke="#667" stroke-width="0.5"/><path d="M642.4 19L644.6 21.2" stroke="#222" stroke-width="0.9" fill="none" /><path d="M651 19.4Q650.6 16.6 652 16.6Q653 15.6 654 16.4Q655.4 16.4 655.2 18.4Q655.4 21 654 22.2H652Q650.4 21 650.2 19.4Z" stroke="#4a4a4a" stroke-width="0.6" fill="#fdfdfd" /><path d="M652.2 16.8V19M653.4 16.2V19M654.4 16.6V19" stroke="#777" stroke-width="0.3" fill="none" /><path d="M664.6 15.4L666.4 17.4L668.4 18.8L666.4 20.2L664.6 22.4L662.8 20.2L660.8 18.8L662.8 17.4Z" stroke="#222" stroke-width="0.9" fill="#f4f4f4" /><circle cx="664.6" cy="18.8" r="1" fill="#fff" stroke="#333" stroke-width="0.3"/><rect x="672.6" y="15.6" width="6" height="4.6" fill="#fff" stroke="#555" stroke-width="0.4"/><rect x="672.6" y="15.6" width="6" height="1.3" fill="#38e0e0"/><rect x="675.4" y="18.6" width="4" height="3.4" fill="#fff" stroke="#555" stroke-width="0.4"/><path d="M674.4 18L677.8 20.6" stroke="#1a1aff" stroke-width="0.9" fill="none" /><rect x="683.1" y="15.2" width="0.5" height="7.6" fill="#bdbdbd"/><rect x="686.7" y="14.2" width="9.9" height="9.6" fill="#cfe6f6"/><rect x="698.2" y="14.2" width="10.1" height="9.6" fill="#cfe6f6"/><rect x="689.6" y="16.2" width="3.9" height="5" rx="0.4" fill="#f4f4f4" stroke="#333" stroke-width="0.9"/><rect x="700.2" y="16.2" width="6.2" height="2.4" fill="#e8e8e8" stroke="#555" stroke-width="0.4"/><path d="M702 16.2v2.4M703.6 16.2v2.4M705 16.2v2.4" stroke="#555" stroke-width="0.35" fill="none" /><path d="M700 21h6.6" stroke="#444" stroke-width="0.6" fill="none" /><path d="M712.4 16V21.4H717.4M712.4 18.6Q715 18.8 715.4 21.4" stroke="#333" stroke-width="0.6" fill="none" /><circle cx="725.6" cy="18.8" r="2.3" fill="none" stroke="#555" stroke-width="0.5"/><path d="M725.6 18.8h1.8M725.6 18.8v-1.6" stroke="#555" stroke-width="0.4" fill="none" /><rect x="735" y="16" width="4.6" height="6" fill="#f6f6f6" stroke="#555" stroke-width="0.4"/><rect x="736.6" y="18.6" width="2.4" height="2.6" fill="#f08050"/><rect x="734.6" y="15.4" width="2" height="1.4" fill="#444"/><path d="M746 16.2H751V20H747.6L746.4 21.4V20H746Z" stroke="#444" stroke-width="0.5" fill="none" /><path d="M758.2 16.4L762.4 21.4M762.4 16.4L758.2 21.4" stroke="#333" stroke-width="0.8" fill="none" /><path d="M669.8 75.8V79.6L667.4 81.8M669.8 79.6L672.6 81.2" stroke="#4a90a4" stroke-width="0.6" fill="none" /><path d="M677.8 79.6Q681 76.2 684.2 79.6Q681 82 677.8 79.6Z" stroke="#111" stroke-width="0.6" fill="#fff" /><ellipse cx="681" cy="79" rx="1.9" ry="1.4" fill="#111"/><path d="M678.2 81.4L683.8 81.4" stroke="#333" stroke-width="0.4" fill="none" /><path d="M691 76.4V80.2M689.4 77.6H692.6" stroke="#111" stroke-width="0.7" fill="none" /><path d="M688.2 80.6Q688 82.4 691 82.2Q694 82.4 693.8 80.6Q691 79.4 688.2 80.6Z" stroke="#111" stroke-width="0.6" fill="#f4f4f4" /><rect x="697.6" y="76" width="0.5" height="7.4" fill="#c8c8c8"/><rect x="702.4" y="77" width="2.4" height="5" fill="#6fa8dc" stroke="#336" stroke-width="0.3"/><rect x="704.8" y="77" width="2.4" height="5" fill="#f08080" stroke="#633" stroke-width="0.3"/><rect x="713" y="77.2" width="4.6" height="4.6" fill="#40d060" stroke="#264" stroke-width="0.4"/><path d="M712.6 82.6L718 76.6" stroke="#333" stroke-width="0.4" fill="none" /><rect x="723.2" y="77" width="4.8" height="5" fill="#5a8ad8" stroke="#336" stroke-width="0.3"/><path d="M723.2 79.5h4.8" stroke="#e8f0ff" stroke-width="0.9" fill="none" /><circle cx="736.3" cy="79.6" r="2.6" fill="#9aa" stroke="#555" stroke-width="0.3"/><path d="M734.4 78.4L736.3 79.6L738.4 78M736.3 79.6V82" stroke="#fff" stroke-width="0.4" fill="none" /><path d="M734.2 79.2Q735 77.4 736.6 77.2" stroke="#e05050" stroke-width="0.7" fill="none" /><path d="M737 82Q738.6 81.2 738.8 79.8" stroke="#40b060" stroke-width="0.7" fill="none" /><path d="M744.2 79.6Q747 76.6 749.8 79.6Q747 82.2 744.2 79.6Z" stroke="#111" stroke-width="0.7" fill="#fff" /><ellipse cx="747" cy="79.5" rx="1.5" ry="1.4" fill="#111"/><path d="M744.6 82L749.4 77" stroke="#111" stroke-width="0.4" fill="none" /><rect x="753.8" y="76" width="0.5" height="7.4" fill="#c8c8c8"/><path d="M758.6 80Q758.4 78 759.8 78.4Q760.6 77.4 761.6 78.2Q762.8 78.2 762.6 80Q762.6 82 761.4 82.8H759.8Q758.6 82 758.6 80Z" stroke="#888" stroke-width="0.45" fill="#f8f8f8" /><text x="760.2" y="78.2" font-size="3" fill="#555" text-anchor="middle" font-weight="bold">3D</text><path d="M7.6 84.4L8.2 82.6L12.6 78.6L14 80L9.4 84Z" stroke="#b89820" stroke-width="0.3" fill="#f2d648" /><path d="M7.6 84.4L8.2 82.8L9.2 83.8Z" stroke="#333" stroke-width="0.2" fill="#333" /><rect x="19.9" y="77.5" width="4.5" height="4.8" fill="#fdfdfd" stroke="#bcbcbc" stroke-width="0.4"/><rect x="17.4" y="80.2" width="4.5" height="4.3" fill="#b4b4b4" stroke="#9a9a9a" stroke-width="0.4"/><path d="M28 78.4L33.8 84M33.8 78.4L28 84" stroke="#e04554" stroke-width="1.0" fill="none" /><rect x="37.3" y="77" width="0.5" height="8" fill="#b8b8b8"/><path d="M40.8 78.2H47.8" stroke="#333" stroke-width="0.8" fill="none" /><path d="M44.3 79.2L47.2 82.3H41.4Z" stroke="#333" stroke-width="0.2" fill="#333" /><path d="M54.6 79.2L57.5 82.5H51.7Z" stroke="#333" stroke-width="0.2" fill="#333" /><path d="M65 82.5L62.1 79.4H67.9Z" stroke="#333" stroke-width="0.2" fill="#333" /><path d="M75 82.4L72.1 79.3H77.9Z" stroke="#333" stroke-width="0.2" fill="#333" /><path d="M72 83.3H78" stroke="#333" stroke-width="0.8" fill="none" /><rect x="82.5" y="75.8" width="12.5" height="10" fill="#cfe3f5"/><rect x="85.2" y="77.4" width="2.8" height="2" rx="0.3" fill="#e8d838" stroke="#a89a20" stroke-width="0.25"/><path d="M86.4 79.6V83.6H88.6M86.4 81.2H88.6" stroke="#444" stroke-width="0.4" fill="none" /><rect x="89" y="80.2" width="3.8" height="1.9" fill="#d8d8d8" stroke="#444" stroke-width="0.4"/><rect x="89" y="82.7" width="3.8" height="1.9" fill="#d8d8d8" stroke="#444" stroke-width="0.4"/><rect x="97.6" y="78.2" width="4.2" height="5.8" fill="#e8f0fb" stroke="#4a7cc0" stroke-width="0.5"/><rect x="97.6" y="78.2" width="4.2" height="1.2" fill="#4a7cc0"/><circle cx="99.2" cy="82" r="1.1" fill="#2a5aa8"/><rect x="80.9" y="73.7" width="15.8" height="15" rx="0.8" fill="none" stroke="#cc1f36" stroke-width="1.2"/><circle cx="107.8" cy="79.8" r="1.9" fill="#f6f6f6" stroke="#222" stroke-width="0.8"/><path d="M109.3 81.4L111.8 83.9" stroke="#222" stroke-width="1.0" fill="none" /><path d="M116.8 77.8H121.8L121.2 84.4H117.4Z" stroke="#a0a0a0" stroke-width="0.4" fill="#c9cdd2" /><path d="M116.4 77.8H122.2" stroke="#8c8c8c" stroke-width="0.7" fill="none" /><rect x="118" y="79.2" width="2.6" height="3.2" fill="#2f7be8"/><path d="M118.8 80.2L119.8 81.4" stroke="#fff" stroke-width="0.5" fill="none" /><rect x="9.70" y="99.20" width="4.4" height="4.4" fill="#fff" stroke="#6a6a6a" stroke-width="0.45"/><path d="M10.50 101.30L11.50 102.50L13.60 99.80" stroke="#000" stroke-width="1.0" fill="none" /><path d="M15.7 103.4L17.5 99.2H21.7L19.9 103.4Z" stroke="#3f6fa6" stroke-width="0.5" fill="#fff" /><path d="M15.7 103.9H19.9" stroke="#7f9cc2" stroke-width="0.5" fill="none" /><rect x="9.70" y="108.05" width="4.4" height="4.4" fill="#fff" stroke="#6a6a6a" stroke-width="0.45"/><path d="M10.50 110.15L11.50 111.34L13.60 108.65" stroke="#000" stroke-width="1.0" fill="none" /><path d="M16.099999999999998 108.25H17.7V112.45H16.099999999999998Z" stroke="#3f6fa6" stroke-width="0.3" fill="none" stroke-dasharray="0.6 0.5"/><path d="M18.3 107.45V113.15" stroke="#3f6fa6" stroke-width="0.6" fill="none" /><path d="M18.3 108.55H21.9M18.3 112.05H21.9" stroke="#4f7db5" stroke-width="0.9" fill="none" /><rect x="9.70" y="116.89" width="4.4" height="4.4" fill="#fff" stroke="#6a6a6a" stroke-width="0.45"/><path d="M10.50 118.99L11.50 120.19L13.60 117.49" stroke="#000" stroke-width="1.0" fill="none" /><path d="M16.0 118.49000000000001H21.7M16.0 121.49000000000001H21.7" stroke="#3f6fa6" stroke-width="0.45" fill="none" /><path d="M18.3 118.49000000000001V121.49000000000001H19.5V118.49000000000001" stroke="#3f6fa6" stroke-width="0.35" fill="#d6e2f0" /><path d="M16.9 118.39Q18.9 115.29 20.9 118.39Z" stroke="#3f6fa6" stroke-width="0.2" fill="#5e87b8" /><rect x="19.50" y="125.73" width="4.4" height="4.4" fill="#fff" stroke="#6a6a6a" stroke-width="0.45"/><path d="M20.30 127.84L21.30 129.03L23.40 126.34" stroke="#000" stroke-width="1.0" fill="none" /><path d="M25.1 125.84H27.5L28.200000000000003 126.53999999999999H31.5V130.34H25.1Z" stroke="#d9b042" stroke-width="0.35" fill="#f6d878" /><path d="M25.3 127.34H31.3" stroke="#fbe9a8" stroke-width="0.5" fill="none" /><path d="M9.7 127.03L11.6 128.94L13.5 127.03" stroke="#333" stroke-width="0.8" fill="none" /><rect x="28.70" y="134.58" width="4.4" height="4.4" fill="#fff" stroke="#6a6a6a" stroke-width="0.45"/><path d="M29.50 136.68L30.50 137.88L32.60 135.18" stroke="#000" stroke-width="1.0" fill="none" /><path d="M34.4 138.78L36.199999999999996 134.58H40.4L38.6 138.78Z" stroke="#3f6fa6" stroke-width="0.5" fill="#fff" /><path d="M34.4 139.28H38.6" stroke="#7f9cc2" stroke-width="0.5" fill="none" /><rect x="28.70" y="143.43" width="4.4" height="4.4" fill="#fff" stroke="#6a6a6a" stroke-width="0.45"/><path d="M29.50 145.53L30.50 146.72L32.60 144.03" stroke="#000" stroke-width="1.0" fill="none" /><path d="M35.199999999999996 144.02L39.4 143.02V147.42000000000002L35.199999999999996 148.42000000000002Z" stroke="#3f6fa6" stroke-width="0.3" fill="#6a92c4" /><path d="M37.3 143.52V147.92000000000002M35.199999999999996 146.22L39.4 145.22" stroke="#e8eef7" stroke-width="0.4" fill="none" /><rect x="28.70" y="152.27" width="4.4" height="4.4" fill="#fff" stroke="#6a6a6a" stroke-width="0.45"/><path d="M29.50 154.37L30.50 155.57L32.60 152.87" stroke="#000" stroke-width="1.0" fill="none" /><path d="M34.8 152.47H36.4V156.67H34.8Z" stroke="#3f6fa6" stroke-width="0.3" fill="none" stroke-dasharray="0.6 0.5"/><path d="M37.0 151.67V157.37" stroke="#3f6fa6" stroke-width="0.6" fill="none" /><path d="M37.0 152.77H40.6M37.0 156.27H40.6" stroke="#4f7db5" stroke-width="0.9" fill="none" /><rect x="28.70" y="161.12" width="4.4" height="4.4" fill="#fff" stroke="#6a6a6a" stroke-width="0.45"/><path d="M29.50 163.22L30.50 164.41L32.60 161.72" stroke="#000" stroke-width="1.0" fill="none" /><path d="M34.8 161.31H36.4V165.51H34.8Z" stroke="#3f6fa6" stroke-width="0.3" fill="none" stroke-dasharray="0.6 0.5"/><path d="M37.0 160.51V166.21" stroke="#3f6fa6" stroke-width="0.6" fill="none" /><path d="M37.0 161.61H40.6M37.0 165.11H40.6" stroke="#4f7db5" stroke-width="0.9" fill="none" /><rect x="28.70" y="169.96" width="4.4" height="4.4" fill="#fff" stroke="#6a6a6a" stroke-width="0.45"/><path d="M29.50 172.06L30.50 173.26L32.60 170.56" stroke="#000" stroke-width="1.0" fill="none" /><path d="M35.199999999999996 170.56L39.4 169.56V173.96L35.199999999999996 174.96Z" stroke="#3f6fa6" stroke-width="0.3" fill="#6a92c4" /><path d="M37.3 170.06V174.46M35.199999999999996 172.76L39.4 171.76" stroke="#e8eef7" stroke-width="0.4" fill="none" /><rect x="28.70" y="178.81" width="4.4" height="4.4" fill="#fff" stroke="#6a6a6a" stroke-width="0.45"/><path d="M29.50 180.91L30.50 182.10L32.60 179.41" stroke="#000" stroke-width="1.0" fill="none" /><path d="M34.8 179.0H38.8V183.0H34.8Z" stroke="#3f6fa6" stroke-width="0.5" fill="#fff" /><path d="M38.8 179.0H40.6V183.0H38.8" stroke="#3f6fa6" stroke-width="0.3" fill="none" stroke-dasharray="0.6 0.5"/><path d="M39.6 178.2L38.8 183.8" stroke="#3f6fa6" stroke-width="0.3" fill="none" /><rect x="28.70" y="187.65" width="4.4" height="4.4" fill="#fff" stroke="#6a6a6a" stroke-width="0.45"/><path d="M29.50 189.75L30.50 190.95L32.60 188.25" stroke="#000" stroke-width="1.0" fill="none" /><path d="M34.8 187.85H38.8V191.85H34.8Z" stroke="#3f6fa6" stroke-width="0.5" fill="#fff" /><path d="M38.8 187.85H40.6V191.85H38.8" stroke="#3f6fa6" stroke-width="0.3" fill="none" stroke-dasharray="0.6 0.5"/><path d="M39.6 187.04999999999998L38.8 192.65" stroke="#3f6fa6" stroke-width="0.3" fill="none" /><rect x="28.70" y="196.50" width="4.4" height="4.4" fill="#fff" stroke="#6a6a6a" stroke-width="0.45"/><path d="M29.50 198.59L30.50 199.79L32.60 197.09" stroke="#000" stroke-width="1.0" fill="none" /><path d="M35.199999999999996 197.09L39.4 196.09V200.49L35.199999999999996 201.49Z" stroke="#3f6fa6" stroke-width="0.3" fill="#6a92c4" /><path d="M37.3 196.59V200.99M35.199999999999996 199.29L39.4 198.29" stroke="#e8eef7" stroke-width="0.4" fill="none" /><rect x="28.70" y="205.34" width="4.4" height="4.4" fill="#fff" stroke="#6a6a6a" stroke-width="0.45"/><path d="M29.50 207.44L30.50 208.64L32.60 205.94" stroke="#000" stroke-width="1.0" fill="none" /><path d="M34.8 205.54H38.8V209.54H34.8Z" stroke="#3f6fa6" stroke-width="0.5" fill="#fff" /><path d="M38.8 205.54H40.6V209.54H38.8" stroke="#3f6fa6" stroke-width="0.3" fill="none" stroke-dasharray="0.6 0.5"/><path d="M39.6 204.73999999999998L38.8 210.34" stroke="#3f6fa6" stroke-width="0.3" fill="none" /><rect x="28.70" y="214.19" width="4.4" height="4.4" fill="#fff" stroke="#6a6a6a" stroke-width="0.45"/><path d="M29.50 216.29L30.50 217.49L32.60 214.79" stroke="#000" stroke-width="1.0" fill="none" /><path d="M34.8 218.98999999999998H40.0" stroke="#3f6fa6" stroke-width="0.4" fill="none" /><path d="M36.199999999999996 218.39L39.4 213.79" stroke="#3f6fa6" stroke-width="0.6" fill="none" /><path d="M35.4 218.89L36.199999999999996 217.79L37.0 218.89Z" stroke="#1f4e8c" stroke-width="0.2" fill="#1f4e8c" /><rect x="28.70" y="223.03" width="4.4" height="4.4" fill="#fff" stroke="#6a6a6a" stroke-width="0.45"/><path d="M29.50 225.13L30.50 226.33L32.60 223.63" stroke="#000" stroke-width="1.0" fill="none" /><path d="M34.8 227.82999999999998H40.0" stroke="#3f6fa6" stroke-width="0.4" fill="none" /><path d="M36.199999999999996 227.23L39.4 222.63" stroke="#3f6fa6" stroke-width="0.6" fill="none" /><path d="M35.4 227.73L36.199999999999996 226.63L37.0 227.73Z" stroke="#1f4e8c" stroke-width="0.2" fill="#1f4e8c" /><rect x="28.70" y="231.88" width="4.4" height="4.4" fill="#fff" stroke="#6a6a6a" stroke-width="0.45"/><path d="M29.50 233.98L30.50 235.18L32.60 232.48" stroke="#000" stroke-width="1.0" fill="none" /><path d="M34.8 232.28H36.6V235.88000000000002H34.8Z" stroke="#3f6fa6" stroke-width="0.4" fill="#eef3fa" /><path d="M36.6 233.08H40.6V235.08H36.6" stroke="#3f6fa6" stroke-width="0.4" fill="#d6e2f0" /><rect x="19.50" y="240.72" width="4.4" height="4.4" fill="#fff" stroke="#6a6a6a" stroke-width="0.45"/><path d="M20.30 242.82L21.30 244.02L23.40 241.32" stroke="#000" stroke-width="1.0" fill="none" /><path d="M25.1 240.82H27.5L28.200000000000003 241.51999999999998H31.5V245.32H25.1Z" stroke="#d9b042" stroke-width="0.35" fill="#f6d878" /><path d="M25.3 242.32H31.3" stroke="#fbe9a8" stroke-width="0.5" fill="none" /><path d="M9.7 242.02L11.6 243.92L13.5 242.02" stroke="#333" stroke-width="0.8" fill="none" /><rect x="28.70" y="249.57" width="4.4" height="4.4" fill="#fff" stroke="#6a6a6a" stroke-width="0.45"/><path d="M29.50 251.67L30.50 252.87L32.60 250.17" stroke="#000" stroke-width="1.0" fill="none" /><path d="M35.199999999999996 250.17000000000002L39.4 249.17000000000002V253.57000000000002L35.199999999999996 254.57000000000002Z" stroke="#3f6fa6" stroke-width="0.3" fill="#6a92c4" /><path d="M37.3 249.67000000000002V254.07000000000002M35.199999999999996 252.37L39.4 251.37" stroke="#e8eef7" stroke-width="0.4" fill="none" /><rect x="28.70" y="258.41" width="4.4" height="4.4" fill="#fff" stroke="#6a6a6a" stroke-width="0.45"/><path d="M29.50 260.51L30.50 261.71L32.60 259.01" stroke="#000" stroke-width="1.0" fill="none" /><path d="M34.8 258.61H36.4V262.81H34.8Z" stroke="#3f6fa6" stroke-width="0.3" fill="none" stroke-dasharray="0.6 0.5"/><path d="M37.0 257.81V263.51" stroke="#3f6fa6" stroke-width="0.6" fill="none" /><path d="M37.0 258.91H40.6M37.0 262.41H40.6" stroke="#4f7db5" stroke-width="0.9" fill="none" /><rect x="28.70" y="267.26" width="4.4" height="4.4" fill="#fff" stroke="#6a6a6a" stroke-width="0.45"/><path d="M29.50 269.36L30.50 270.56L32.60 267.86" stroke="#000" stroke-width="1.0" fill="none" /><path d="M34.8 267.46H36.4V271.65999999999997H34.8Z" stroke="#3f6fa6" stroke-width="0.3" fill="none" stroke-dasharray="0.6 0.5"/><path d="M37.0 266.65999999999997V272.35999999999996" stroke="#3f6fa6" stroke-width="0.6" fill="none" /><path d="M37.0 267.76H40.6M37.0 271.26H40.6" stroke="#4f7db5" stroke-width="0.9" fill="none" /><rect x="28.70" y="276.10" width="4.4" height="4.4" fill="#fff" stroke="#6a6a6a" stroke-width="0.45"/><path d="M29.50 278.20L30.50 279.40L32.60 276.70" stroke="#000" stroke-width="1.0" fill="none" /><path d="M34.4 280.3L36.199999999999996 276.1H40.4L38.6 280.3Z" stroke="#3f6fa6" stroke-width="0.5" fill="#fff" /><path d="M34.4 280.8H38.6" stroke="#7f9cc2" stroke-width="0.5" fill="none" /><rect x="28.70" y="284.94" width="4.4" height="4.4" fill="#fff" stroke="#6a6a6a" stroke-width="0.45"/><path d="M29.50 287.04L30.50 288.25L32.60 285.54" stroke="#000" stroke-width="1.0" fill="none" /><path d="M35.199999999999996 285.53999999999996L39.4 284.53999999999996V288.94L35.199999999999996 289.94Z" stroke="#3f6fa6" stroke-width="0.3" fill="#6a92c4" /><path d="M37.3 285.03999999999996V289.44M35.199999999999996 287.74L39.4 286.74" stroke="#e8eef7" stroke-width="0.4" fill="none" /><rect x="28.70" y="293.79" width="4.4" height="4.4" fill="#fff" stroke="#6a6a6a" stroke-width="0.45"/><path d="M29.50 295.89L30.50 297.09L32.60 294.39" stroke="#000" stroke-width="1.0" fill="none" /><path d="M34.8 293.99H38.8V297.99H34.8Z" stroke="#3f6fa6" stroke-width="0.5" fill="#fff" /><path d="M38.8 293.99H40.6V297.99H38.8" stroke="#3f6fa6" stroke-width="0.3" fill="none" stroke-dasharray="0.6 0.5"/><path d="M39.6 293.19L38.8 298.79" stroke="#3f6fa6" stroke-width="0.3" fill="none" /><rect x="28.70" y="302.64" width="4.4" height="4.4" fill="#fff" stroke="#6a6a6a" stroke-width="0.45"/><path d="M29.50 304.74L30.50 305.94L32.60 303.24" stroke="#000" stroke-width="1.0" fill="none" /><path d="M34.8 302.84H38.8V306.84H34.8Z" stroke="#3f6fa6" stroke-width="0.5" fill="#fff" /><path d="M38.8 302.84H40.6V306.84H38.8" stroke="#3f6fa6" stroke-width="0.3" fill="none" stroke-dasharray="0.6 0.5"/><path d="M39.6 302.03999999999996L38.8 307.64" stroke="#3f6fa6" stroke-width="0.3" fill="none" /><rect x="28.70" y="311.48" width="4.4" height="4.4" fill="#fff" stroke="#6a6a6a" stroke-width="0.45"/><path d="M29.50 313.58L30.50 314.78L32.60 312.08" stroke="#000" stroke-width="1.0" fill="none" /><path d="M35.199999999999996 312.08L39.4 311.08V315.48L35.199999999999996 316.48Z" stroke="#3f6fa6" stroke-width="0.3" fill="#6a92c4" /><path d="M37.3 311.58V315.98M35.199999999999996 314.28000000000003L39.4 313.28000000000003" stroke="#e8eef7" stroke-width="0.4" fill="none" /><rect x="28.70" y="320.33" width="4.4" height="4.4" fill="#fff" stroke="#6a6a6a" stroke-width="0.45"/><path d="M29.50 322.43L30.50 323.63L32.60 320.93" stroke="#000" stroke-width="1.0" fill="none" /><path d="M34.8 320.53H38.8V324.53H34.8Z" stroke="#3f6fa6" stroke-width="0.5" fill="#fff" /><path d="M38.8 320.53H40.6V324.53H38.8" stroke="#3f6fa6" stroke-width="0.3" fill="none" stroke-dasharray="0.6 0.5"/><path d="M39.6 319.72999999999996L38.8 325.33" stroke="#3f6fa6" stroke-width="0.3" fill="none" /><rect x="28.70" y="329.17" width="4.4" height="4.4" fill="#fff" stroke="#6a6a6a" stroke-width="0.45"/><path d="M29.50 331.27L30.50 332.47L32.60 329.77" stroke="#000" stroke-width="1.0" fill="none" /><path d="M34.8 333.97H40.0" stroke="#3f6fa6" stroke-width="0.4" fill="none" /><path d="M36.199999999999996 333.37L39.4 328.77" stroke="#3f6fa6" stroke-width="0.6" fill="none" /><path d="M35.4 333.87L36.199999999999996 332.77L37.0 333.87Z" stroke="#1f4e8c" stroke-width="0.2" fill="#1f4e8c" /><rect x="28.70" y="338.02" width="4.4" height="4.4" fill="#fff" stroke="#6a6a6a" stroke-width="0.45"/><path d="M29.50 340.12L30.50 341.32L32.60 338.62" stroke="#000" stroke-width="1.0" fill="none" /><path d="M34.8 342.82000000000005H40.0" stroke="#3f6fa6" stroke-width="0.4" fill="none" /><path d="M36.199999999999996 342.22L39.4 337.62" stroke="#3f6fa6" stroke-width="0.6" fill="none" /><path d="M35.4 342.72L36.199999999999996 341.62L37.0 342.72Z" stroke="#1f4e8c" stroke-width="0.2" fill="#1f4e8c" /><rect x="28.70" y="346.86" width="4.4" height="4.4" fill="#fff" stroke="#6a6a6a" stroke-width="0.45"/><path d="M29.50 348.96L30.50 350.16L32.60 347.46" stroke="#000" stroke-width="1.0" fill="none" /><path d="M34.8 347.26H36.6V350.86H34.8Z" stroke="#3f6fa6" stroke-width="0.4" fill="#eef3fa" /><path d="M36.6 348.06H40.6V350.06H36.6" stroke="#3f6fa6" stroke-width="0.4" fill="#d6e2f0" /><rect x="9.70" y="355.70" width="4.4" height="4.4" fill="#fff" stroke="#6a6a6a" stroke-width="0.45"/><path d="M10.50 357.80L11.50 359.00L13.60 356.30" stroke="#000" stroke-width="1.0" fill="none" /><path d="M16.3 355.79999999999995H18.7L19.400000000000002 356.5H22.700000000000003V360.29999999999995H16.3Z" stroke="#d9b042" stroke-width="0.35" fill="#f6d878" /><path d="M16.5 357.29999999999995H22.5" stroke="#fbe9a8" stroke-width="0.5" fill="none" />
<rect x="93.60" y="90.20" width="39.00" height="13.80" fill="#000000" rx="0" opacity="0.12"/>
<rect x="93.00" y="89.70" width="38.40" height="13.20" fill="#f4f4f4" stroke="#a9a9a9" stroke-width="0.6" rx="0" /></svg>
<span style="font-size:6.0px;line-height:7.20px;color:#555;transform:translate(112.20px,94.0px) translateX(-50%);">New group</span>
</body></html>
